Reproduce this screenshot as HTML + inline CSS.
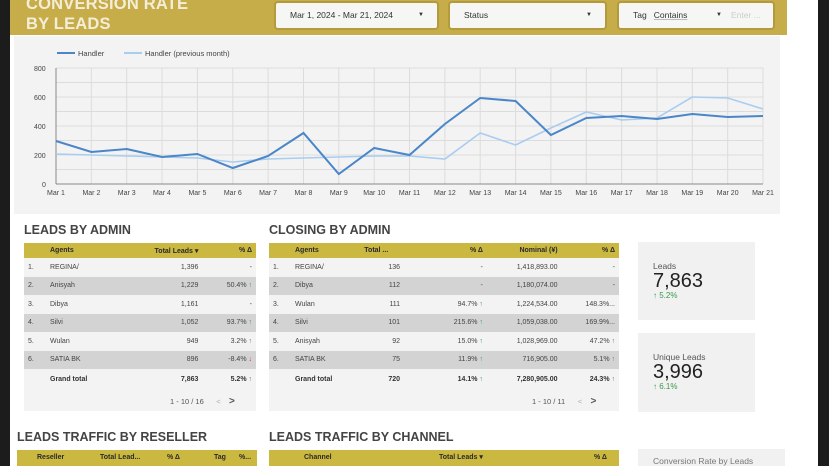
<!DOCTYPE html>
<html><head><meta charset="utf-8"><style>
*{margin:0;padding:0;box-sizing:border-box}
html,body{width:829px;height:466px;overflow:hidden}
body{background:#1c1c1c;font-family:"Liberation Sans",sans-serif;position:relative}
.page{position:absolute;left:10px;top:0;width:808px;height:466px;background:#fff}
.hdr{position:absolute;left:10px;top:0;width:777px;height:35px;background:#c6ad4a}
.title{position:absolute;left:26px;top:-6px;color:#f4eed8;font-weight:bold;font-size:16.5px;line-height:20px;letter-spacing:.2px}
.dd{position:absolute;top:3px;height:25px;background:#f6f6f4;border-radius:2px;box-shadow:0 0 0 2px #b39a3c;font-size:8.5px;color:#333;line-height:25px;padding-left:14px}
.dd .ar{position:absolute;font-size:6px}
.card{position:absolute;background:#f3f3f3}
.h{position:absolute;font-weight:bold;font-size:12.5px;color:#444}
table{border-collapse:collapse;font-size:7px;color:#444;width:100%}
td{height:18.5px;padding:0 4px;white-space:nowrap}
thead td{background:#cbb840;font-weight:bold;color:#2a2a2a;height:15px}
tr.g td{background:#d3d3d3}
tr.t td{font-weight:bold;height:21px;color:#333}
.r{text-align:right}.up{color:#3a9a4e}.dn{color:#d33}
.sc{position:absolute;background:#f1f1f1;color:#555;padding-left:15px}
.sc .l{font-size:8.5px;margin-top:19px}
.sc .v{font-size:20px;color:#222;line-height:20px}
.sc .d{font-size:8px;color:#3a9a4e}
.pg{font-size:7.5px;color:#555;position:absolute}
.pg b{font-size:10px}
</style></head><body>
<div class="page"></div>
<div class="hdr"></div>
<div class="title">CONVERSION RATE<br>BY LEADS</div>
<div class="dd" style="left:276px;width:161px">Mar 1, 2024 - Mar 21, 2024<span class="ar" style="left:142px">▼</span></div>
<div class="dd" style="left:450px;width:155px">Status<span class="ar" style="left:136px">▼</span></div>
<div class="dd" style="left:619px;width:154px">Tag&nbsp;&nbsp; <span style="text-decoration:underline;text-decoration-color:#bbb">Contains</span><span class="ar" style="left:97px">▼</span><span style="position:absolute;left:112px;color:#ccc">Enter ...</span></div>

<div class="card" style="left:14px;top:36px;width:766px;height:178px"></div>
<svg style="position:absolute;left:0;top:0" width="829" height="215">
<g font-size="7.5" fill="#444" font-family="Liberation Sans">
<line x1="57" y1="53" x2="75" y2="53" stroke="#4a86c8" stroke-width="2"/><text x="78" y="56">Handler</text>
<line x1="124" y1="53" x2="142" y2="53" stroke="#a9cdf0" stroke-width="2"/><text x="145" y="56">Handler (previous month)</text>
</g>
<g stroke="#dcdcdc" stroke-width="1">
<line x1="56" y1="68" x2="763" y2="68"/><line x1="56" y1="82.5" x2="763" y2="82.5"/><line x1="56" y1="97" x2="763" y2="97"/><line x1="56" y1="111.5" x2="763" y2="111.5"/><line x1="56" y1="126" x2="763" y2="126"/><line x1="56" y1="140.5" x2="763" y2="140.5"/><line x1="56" y1="155" x2="763" y2="155"/><line x1="56" y1="169.5" x2="763" y2="169.5"/>
<path d="M91.35 68V184M126.7 68V184M162 68V184M197.4 68V184M232.8 68V184M268.1 68V184M303.5 68V184M338.8 68V184M374.2 68V184M409.5 68V184M444.9 68V184M480.2 68V184M515.6 68V184M550.9 68V184M586.3 68V184M621.6 68V184M657 68V184M692.3 68V184M727.7 68V184M763 68V184"/>
</g>
<line x1="56" y1="68" x2="56" y2="184" stroke="#888"/><line x1="56" y1="184" x2="763" y2="184" stroke="#888"/>
<polyline fill="none" stroke="#a9cdf0" stroke-width="1.6" points="56,154 91.4,155 126.7,156 162,157 197.4,158 232.8,162 268.1,159 303.5,158 338.8,157 374.2,156 409.5,156 444.9,159 480.2,133 515.6,145 550.9,128 586.3,112 621.6,120 657,118 692.3,97 727.7,98 763,109"/>
<polyline fill="none" stroke="#4a86c8" stroke-width="2" points="56,141 91.4,152 126.7,149 162,157 197.4,154 232.8,168 268.1,156 303.5,133 338.8,174 374.2,148 409.5,155 444.9,124 480.2,98 515.6,101 550.9,135 586.3,118 621.6,116 657,119 692.3,114 727.7,117 763,116"/>
<g font-size="7" fill="#444" font-family="Liberation Sans">
<text x="34" y="71">800</text><text x="34" y="100">600</text><text x="34" y="129">400</text><text x="34" y="158">200</text><text x="42" y="187">0</text>
<g text-anchor="middle">
<text x="56" y="195">Mar 1</text><text x="91.4" y="195">Mar 2</text><text x="126.7" y="195">Mar 3</text><text x="162" y="195">Mar 4</text><text x="197.4" y="195">Mar 5</text><text x="232.8" y="195">Mar 6</text><text x="268.1" y="195">Mar 7</text><text x="303.5" y="195">Mar 8</text><text x="338.8" y="195">Mar 9</text><text x="374.2" y="195">Mar 10</text><text x="409.5" y="195">Mar 11</text><text x="444.9" y="195">Mar 12</text><text x="480.2" y="195">Mar 13</text><text x="515.6" y="195">Mar 14</text><text x="550.9" y="195">Mar 15</text><text x="586.3" y="195">Mar 16</text><text x="621.6" y="195">Mar 17</text><text x="657" y="195">Mar 18</text><text x="692.3" y="195">Mar 19</text><text x="727.7" y="195">Mar 20</text><text x="763" y="195">Mar 21</text></g></g>
</svg>

<div class="h" style="left:24px;top:223px">LEADS BY ADMIN</div>
<div class="card" style="left:24px;top:243px;width:232px;height:168px">
<table><thead><tr><td style="width:22px"></td><td>Agents</td><td class="r">Total Leads ▾</td><td class="r">% Δ</td></tr></thead>
<tr><td>1.</td><td>REGINA/</td><td class="r">1,396</td><td class="r">-</td></tr>
<tr class="g"><td>2.</td><td>Anisyah</td><td class="r">1,229</td><td class="r">50.4% <span class="up">↑</span></td></tr>
<tr><td>3.</td><td>Dibya</td><td class="r">1,161</td><td class="r">-</td></tr>
<tr class="g"><td>4.</td><td>Silvi</td><td class="r">1,052</td><td class="r">93.7% <span class="up">↑</span></td></tr>
<tr><td>5.</td><td>Wulan</td><td class="r">949</td><td class="r">3.2% <span class="up">↑</span></td></tr>
<tr class="g"><td>6.</td><td>SATIA BK</td><td class="r">896</td><td class="r">-8.4% <span class="dn">↓</span></td></tr>
<tr class="t"><td></td><td>Grand total</td><td class="r">7,863</td><td class="r">5.2% <span class="up">↑</span></td></tr></table>
<div class="pg" style="left:146px;top:153px">1 - 10 / 16 &nbsp;&nbsp;&nbsp;&nbsp; <span style="color:#aaa">&lt;</span> &nbsp;&nbsp;&nbsp;<b>&gt;</b></div></div>

<div class="h" style="left:269px;top:223px">CLOSING BY ADMIN</div>
<div class="card" style="left:269px;top:243px;width:350px;height:168px">
<table><thead><tr><td style="width:22px"></td><td>Agents</td><td>Total ...</td><td class="r">% Δ</td><td class="r">Nominal (¥)</td><td class="r">% Δ</td></tr></thead>
<tr><td>1.</td><td>REGINA/</td><td class="r" style="padding-right:30px">136</td><td class="r">-</td><td class="r">1,418,893.00</td><td class="r">-</td></tr>
<tr class="g"><td>2.</td><td>Dibya</td><td class="r" style="padding-right:30px">112</td><td class="r">-</td><td class="r">1,180,074.00</td><td class="r">-</td></tr>
<tr><td>3.</td><td>Wulan</td><td class="r" style="padding-right:30px">111</td><td class="r">94.7% <span class="up">↑</span></td><td class="r">1,224,534.00</td><td class="r">148.3%...</td></tr>
<tr class="g"><td>4.</td><td>Silvi</td><td class="r" style="padding-right:30px">101</td><td class="r">215.6% <span class="up">↑</span></td><td class="r">1,059,038.00</td><td class="r">169.9%...</td></tr>
<tr><td>5.</td><td>Anisyah</td><td class="r" style="padding-right:30px">92</td><td class="r">15.0% <span class="up">↑</span></td><td class="r">1,028,969.00</td><td class="r">47.2% <span class="up">↑</span></td></tr>
<tr class="g"><td>6.</td><td>SATIA BK</td><td class="r" style="padding-right:30px">75</td><td class="r">11.9% <span class="up">↑</span></td><td class="r">716,905.00</td><td class="r">5.1% <span class="up">↑</span></td></tr>
<tr class="t"><td></td><td>Grand total</td><td class="r" style="padding-right:30px">720</td><td class="r">14.1% <span class="up">↑</span></td><td class="r">7,280,905.00</td><td class="r">24.3% <span class="up">↑</span></td></tr></table>
<div class="pg" style="left:263px;top:153px">1 - 10 / 11 &nbsp;&nbsp;&nbsp;&nbsp; <span style="color:#aaa">&lt;</span> &nbsp;&nbsp;&nbsp;<b>&gt;</b></div></div>

<div class="sc" style="left:638px;top:242px;width:117px;height:78px"><div class="l">Leads</div><div class="v">7,863</div><div class="d">↑ 5.2%</div></div>
<div class="sc" style="left:638px;top:333px;width:117px;height:79px"><div class="l">Unique Leads</div><div class="v">3,996</div><div class="d">↑ 6.1%</div></div>
<div class="sc" style="left:638px;top:449px;width:147px;height:17px"><div class="l" style="margin-top:7px;color:#777">Conversion Rate by Leads</div></div>

<div class="h" style="left:17px;top:430px">LEADS TRAFFIC BY RESELLER</div>
<div style="position:absolute;left:17px;top:450px;width:240px;height:16px;background:#cbb840;font-size:7px;font-weight:bold;color:#2a2a2a;line-height:15px">
<span style="position:absolute;left:20px">Reseller</span><span style="position:absolute;left:83px">Total Lead...</span><span style="position:absolute;left:150px">% Δ</span><span style="position:absolute;left:197px">Tag</span><span style="position:absolute;left:222px">%...</span></div>
<div class="h" style="left:269px;top:430px">LEADS TRAFFIC BY CHANNEL</div>
<div style="position:absolute;left:269px;top:450px;width:350px;height:16px;background:#cbb840;font-size:7px;font-weight:bold;color:#2a2a2a;line-height:15px">
<span style="position:absolute;left:35px">Channel</span><span style="position:absolute;left:170px">Total Leads ▾</span><span style="position:absolute;left:325px">% Δ</span></div>
</body></html>
